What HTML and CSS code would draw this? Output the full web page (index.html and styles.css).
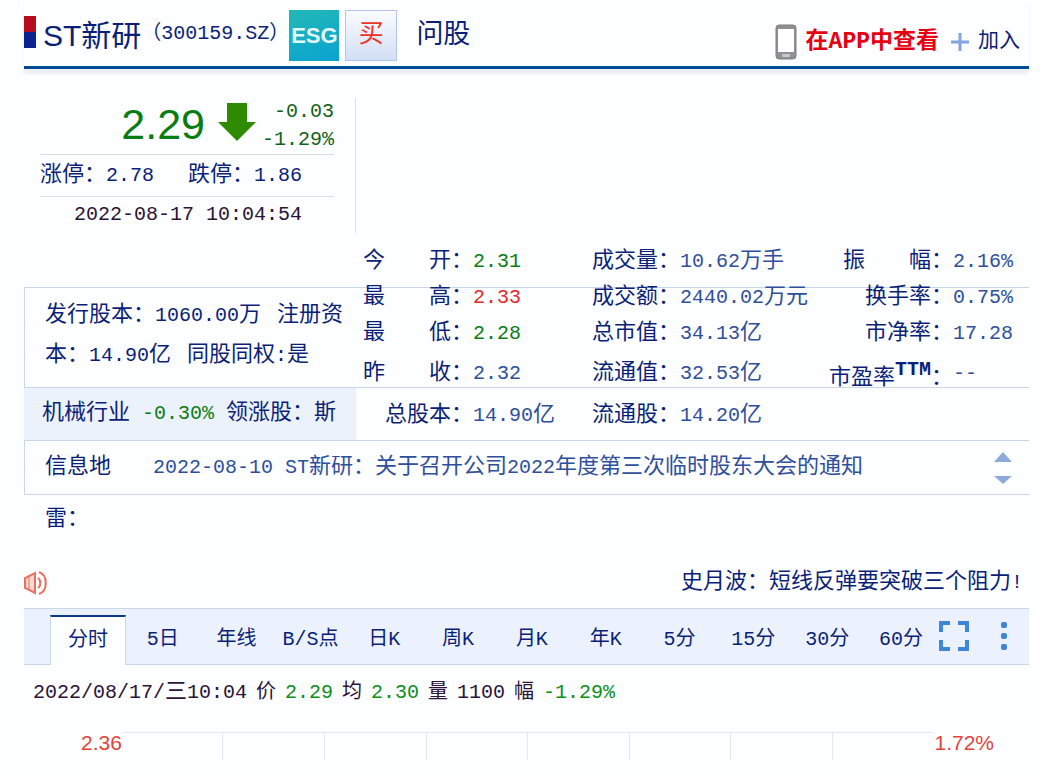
FILE: index.html
```html
<!DOCTYPE html>
<html lang="zh-CN">
<head>
    <meta charset="UTF-8">
    <meta name="viewport" content="width=device-width, initial-scale=1.0">
    <title>ST新研(300159.SZ)</title>
    <link rel="stylesheet" href="styles.css">
</head>
<body>
    <div class="page">
        <header class="stock-header">
            <span class="flag"></span>
            <h1>ST新研</h1>
            <span class="code">（300159.SZ）</span>
            <a href="#esg" class="esg">ESG</a>
            <button class="buy">买</button>
            <a href="#ask" class="ask">问股</a>
            <a href="#app" class="app-link">
                <svg width="22" height="36" viewBox="0 0 22 36">
                    <rect x="1" y="1" width="20" height="34" rx="3" fill="#909094" stroke="#7f7f84"/>
                    <rect x="3" y="5" width="16" height="23" fill="#fff"/>
                    <rect x="7" y="30" width="8" height="3" rx="1" fill="#c8c8cc"/>
                </svg>
                <span>在APP中查看</span>
            </a>
            <button class="add">
                <svg width="18" height="18" viewBox="0 0 18 18"><path d="M9 0v18M0 9h18" stroke="#84a4e0" stroke-width="3"/></svg>
                <span>加入</span>
            </button>
        </header>

        <main>
            <section class="quote">
                <div class="price-box">
                    <div class="price-row">
                        <strong class="price">2.29</strong>
                        <svg width="38" height="38" viewBox="0 0 38 38"><path d="M9 0h20v19h9L19 38 0 19h9z" fill="#2e8b00"/></svg>
                        <div class="change">
                            <div>-0.03</div>
                            <div>-1.29%</div>
                        </div>
                    </div>
                    <div class="limit-row">
                        <div><span class="cn">涨停：</span>2.78</div>
                        <div><span class="cn">跌停：</span>1.86</div>
                    </div>
                    <div class="time-row">2022-08-17 10:04:54</div>
                </div>

                <div class="company">
                    <p><span class="cn">发行股本：</span>1060.00<span class="cn">万</span><span class="cn next">注册资</span><span class="cn">本：</span>14.90<span class="cn">亿</span><span class="cn next">同股同权</span>:<span class="cn">是</span></p>
                </div>

                <div class="industry">
                    <a href="#industry" class="cn">机械行业</a> <span class="down">-0.30%</span> <span class="cn">领涨股：斯</span>
                </div>

                <dl class="metrics">
                    <dt>今　　开：</dt><dd class="down">2.31</dd>
                    <dt>成交量：</dt><dd>10.62<span class="cn">万手</span></dd>
                    <dt>振　　幅：</dt><dd>2.16%</dd>

                    <dt>最　　高：</dt><dd class="up">2.33</dd>
                    <dt>成交额：</dt><dd>2440.02<span class="cn">万元</span></dd>
                    <dt>换手率：</dt><dd>0.75%</dd>

                    <dt>最　　低：</dt><dd class="down">2.28</dd>
                    <dt>总市值：</dt><dd>34.13<span class="cn">亿</span></dd>
                    <dt>市净率：</dt><dd>17.28</dd>

                    <dt>昨　　收：</dt><dd>2.32</dd>
                    <dt>流通值：</dt><dd>32.53<span class="cn">亿</span></dd>
                    <dt class="pe">市盈率<sup>TTM</sup>：</dt><dd>--</dd>

                    <dt>总股本：</dt><dd>14.90<span class="cn">亿</span></dd>
                    <dt>流通股：</dt><dd>14.20<span class="cn">亿</span></dd>
                </dl>
            </section>

            <section class="news">
                <h2>信息地雷：</h2>
                <a href="#news">2022-08-10 ST<span class="cn">新研：关于召开公司</span>2022<span class="cn">年度第三次临时股东大会的通知</span></a>
                <div class="news-arrows">
                    <button aria-label="上一条"><svg width="18" height="10" viewBox="0 0 18 10"><path d="M9 0l9 10H0z" fill="#8eaada"/></svg></button>
                    <button aria-label="下一条"><svg width="18" height="8" viewBox="0 0 18 8"><path d="M0 0h18L9 8z" fill="#8eaada"/></svg></button>
                </div>
            </section>

            <section class="broadcast">
                <svg width="24" height="24" viewBox="0 0 24 24" fill="none" stroke="#e8705c" stroke-width="2">
                    <path d="M1 7v10l10 5V2z" fill="#fbd9d0"/>
                    <path d="M5 6v12" stroke-width="1"/>
                    <path d="M14 7c3 2 3 8 0 10M15 1c9 3 9 19 0 22"/>
                </svg>
                <a href="#live"><span class="cn">史月波：短线反弹要突破三个阻力</span>!</a>
            </section>

            <nav class="tabs">
                <button class="tab active">分时</button>
                <button class="tab">5日</button>
                <button class="tab">年线</button>
                <button class="tab">B/S点</button>
                <button class="tab">日K</button>
                <button class="tab">周K</button>
                <button class="tab">月K</button>
                <button class="tab">年K</button>
                <button class="tab">5分</button>
                <button class="tab">15分</button>
                <button class="tab">30分</button>
                <button class="tab">60分</button>
                <div class="tools">
                    <button aria-label="全屏"><svg width="30" height="30" viewBox="0 0 30 30"><path d="M2 11V2h9M19 2h9v9M28 19v9h-9M11 28H2v-9" fill="none" stroke="#3d86da" stroke-width="4"/></svg></button>
                    <button aria-label="更多"><svg width="6" height="28" viewBox="0 0 6 28" fill="#3d86da"><rect width="6" height="6" rx="2"/><rect y="11" width="6" height="6" rx="2"/><rect y="22" width="6" height="6" rx="2"/></svg></button>
                </div>
            </nav>

            <div class="tick-info">
                <span>2022/08/17/<span class="cn">三</span>10:04</span>
                <span>价</span><span class="down">2.29</span>
                <span>均</span><span class="down">2.30</span>
                <span>量</span><span>1100</span>
                <span>幅</span><span class="down">-1.29%</span>
            </div>

            <div class="chart">
                <span class="axis">2.36</span>
                <div class="chart-grid">
                    <i></i><i></i><i></i><i></i><i></i><i></i><i></i><i></i>
                </div>
                <span class="axis">1.72%</span>
            </div>
        </main>
    </div>
</body>
</html>
```
FILE: styles.css
```css
* { box-sizing: border-box; }
body {
    margin: 0;
    background-color: #fdfeff;
    color: #0b1f78;
    font-family: "Liberation Mono", "Noto Sans CJK SC", monospace;
    font-size: 20px;
    line-height: 28px;
}
a { color: inherit; text-decoration: none; }
button {
    padding: 0;
    border: 0;
    background: none;
    color: inherit;
    font: inherit;
    cursor: pointer;
}
svg { display: block; flex: none; }
.cn { font-size: 22px; }
.up { color: #e8282c; }
.down { color: #0a7d12; }

.page {
    padding: 0 19px 0 24px;
}

/* header */
.stock-header {
    display: flex;
    align-items: center;
    height: 69px;
    padding-top: 5px;
    border-bottom: 3px solid #004b97;
    box-shadow: 0 5px 3px #eceff4;
    white-space: nowrap;
}
.flag {
    width: 12px;
    height: 32px;
    margin: 0 7px 8px 0;
    background: linear-gradient(#b50d1c 50%, #0a2390 50%);
}
.stock-header h1 {
    margin: 0;
    font-family: "Liberation Sans", "Noto Sans CJK SC", sans-serif;
    font-size: 30px;
    font-weight: normal;
}
.code { padding-bottom: 4px; }
.esg {
    width: 50px;
    background: linear-gradient(160deg, #22b9b6, #0aa2d2);
    color: #e2fbff;
    font: bold 22px/51px "Liberation Sans", sans-serif;
    text-align: center;
}
.buy {
    width: 52px;
    height: 51px;
    margin: 0 19px 0 6px;
    border: 1px solid #b2c5e8;
    background: linear-gradient(#fbfcff, #d2def5);
    color: #ee3326;
    font-size: 25px;
}
.ask { font-size: 27px; }
.app-link {
    display: flex;
    align-items: center;
    gap: 9px;
    margin-left: auto;
    padding-top: 12px;
    color: #e60012;
    font-size: 23px;
    font-weight: bold;
}
.add {
    display: flex;
    align-items: center;
    gap: 9px;
    margin: 0 9px 0 12px;
    padding-top: 12px;
    font-size: 21px;
}

/* quote */
.quote {
    display: grid;
    grid-template-columns: 332px 1fr;
}
.price-box {
    grid-area: 1 / 1;
    margin: 29px 0 54px;
    padding: 0 21px 0 16px;
    border-right: 1px solid #d8e0ea;
}
.price-row {
    display: flex;
    align-items: flex-start;
    justify-content: flex-end;
    height: 57px;
    border-bottom: 1px solid #d3dfeb;
    color: #0a7d12;
}
.price-row svg { margin-top: 5px; }
.price {
    margin-right: 13px;
    font: 43px/52px "Liberation Sans", sans-serif;
}
.change {
    width: 78px;
    color: #12621a;
    text-align: right;
}
.limit-row {
    display: flex;
    gap: 34px;
    border-bottom: 1px solid #d3dfeb;
    line-height: 41px;
}
.time-row {
    padding-left: 34px;
    color: #2c1338;
    line-height: 36px;
}
.company {
    grid-area: 2 / 1 / auto / -1;
    padding: 8px 0 11px 20px;
    border: 1px solid #c9d6e8;
    border-right: 0;
}
.company p {
    width: 310px;
    margin: 0;
    line-height: 40px;
}
.company .next { margin-left: 16px; }
.industry {
    grid-area: 3 / 1;
    padding-left: 18px;
    background-color: #ebf2fc;
    line-height: 52px;
    white-space: nowrap;
}

/* the metrics sit over the company and industry rows */
.metrics {
    grid-area: 1 / 2 / span 3 / auto;
    align-self: end;
    display: grid;
    grid-template-columns: 117px 119px 88px 1fr auto 76px;
    grid-template-rows: 36px 36px 36px 44px 40px;
    align-items: center;
    margin: 0 0 4px;
    white-space: nowrap;
}
.metrics dt {
    font-size: 22px;
    text-align: right;
}
.metrics dd { margin: 0; }
.metrics dd:not(.up):not(.down) { color: #2f4f9c; }
.metrics .pe { padding-top: 10px; }
.metrics sup {
    font-family: "Liberation Mono", monospace;
    font-size: 20px;
    font-weight: bold;
    line-height: 0;
    vertical-align: 9px;
}

/* news */
.news {
    display: flex;
    height: 55px;
    padding: 1px 0 0 20px;
    border: 1px solid #c9d6e8;
    border-right: 0;
    line-height: 52px;
}
.news h2 {
    width: 80px;
    margin: 0 28px 0 0;
    font-size: 22px;
    font-weight: normal;
}
.news a { color: #2f4f9c; white-space: nowrap; }
.news-arrows {
    display: flex;
    flex-direction: column;
    justify-content: center;
    gap: 14px;
    margin: 0 17px 0 auto;
}
.broadcast {
    display: flex;
    align-items: center;
    justify-content: space-between;
    height: 52px;
    margin-top: 61px;
    padding: 2px 6px 0 0;
}

/* tabs */
.tabs {
    display: flex;
    height: 57px;
    padding: 6px 0 0 26px;
    border: solid #cad7e9;
    border-width: 1px 0;
    background-color: #ebf2fd;
}
.tab {
    flex: 1;
    height: 50px;
    white-space: nowrap;
}
.tab.active {
    border: solid #cad7e9;
    border-width: 2px 1px 0;
    border-top-color: #0b3a86;
    background-color: #fdfeff;
}
.tools {
    display: flex;
    align-items: center;
    justify-content: space-between;
    width: 91px;
    padding: 0 22px 8px 1px;
}

/* chart */
.tick-info {
    display: flex;
    gap: 9px;
    padding: 14px 0 0 9px;
    color: #2c1338;
}
.tick-info .down { color: #0c8f18; }
.chart {
    display: flex;
    padding: 25px 35px 0 57px;
}
.axis {
    color: #e0443c;
    font: 21px/22px "Liberation Sans", sans-serif;
}
.chart-grid {
    flex: 1;
    display: grid;
    grid-template-columns: repeat(8, 1fr);
    height: 28px;
    border-top: 1px solid #e4e8ee;
}
.chart-grid i { border-right: 1px solid #e4e8ee; }
.chart-grid i:last-child { border: 0; }
```
